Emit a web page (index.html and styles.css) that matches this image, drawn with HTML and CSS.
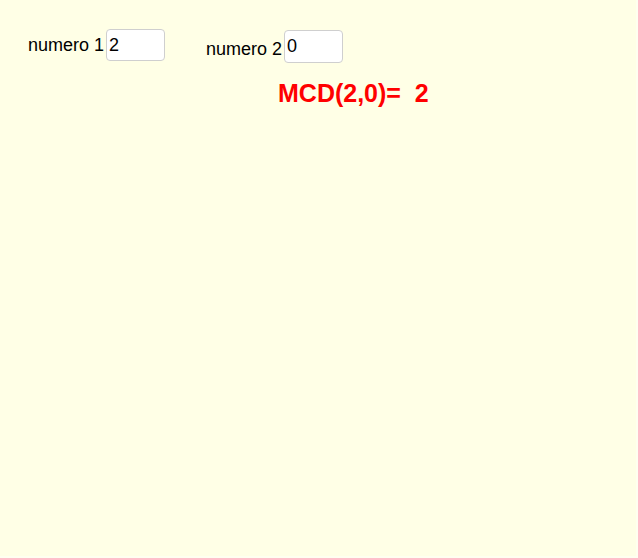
FILE: index.html
```html
<!DOCTYPE html>
<html lang="es">
<head>
<meta charset="utf-8">
<title>MCD</title>
<link rel="stylesheet" href="styles.css">
</head>
<body>
<div class="canvas">
  <div class="row">
    <div class="field field-1">
      <label class="label" for="n1">numero 1</label>
      <input class="box" id="n1" type="text" value="2">
    </div>
    <div class="field field-2">
      <label class="label" for="n2">numero 2</label>
      <input class="box" id="n2" type="text" value="0">
    </div>
  </div>
  <div class="result">MCD(2,0)=  2</div>
</div>
</body>
</html>
```
FILE: styles.css
```css
html, body {
  margin: 0;
  padding: 0;
  background: #fffff0;
}
.canvas {
  width: 636px;
  height: 556px;
  background: #ffffe6;
  font-family: "Liberation Sans", Arial, sans-serif;
  color: #000;
  overflow: hidden;
}
.row {
  display: flex;
  align-items: flex-start;
  padding: 29px 0 0 28px;
}
.field {
  display: flex;
  align-items: flex-start;
}
.field-1 .label {
  margin-top: 6px;
}
.field-2 {
  margin-left: 41px;
  margin-top: 1px;
}
.field-2 .label {
  margin-top: 9px;
}
.label {
  font-size: 18px;
  line-height: 20px;
  white-space: nowrap;
}
.box {
  box-sizing: border-box;
  width: 59px;
  height: 32px;
  margin: 0 0 0 2px;
  padding: 0 2px;
  border: 1px solid #cfcfcf;
  border-radius: 4px;
  background: #ffffff;
  font-family: "Liberation Sans", Arial, sans-serif;
  font-size: 18px;
  color: #000;
  outline: none;
}
.field-2 .box {
  height: 33px;
}
.result {
  margin-top: 15px;
  padding-left: 278px;
  font-size: 25px;
  line-height: 30px;
  font-weight: bold;
  color: #ff0000;
  white-space: pre;
}
```
